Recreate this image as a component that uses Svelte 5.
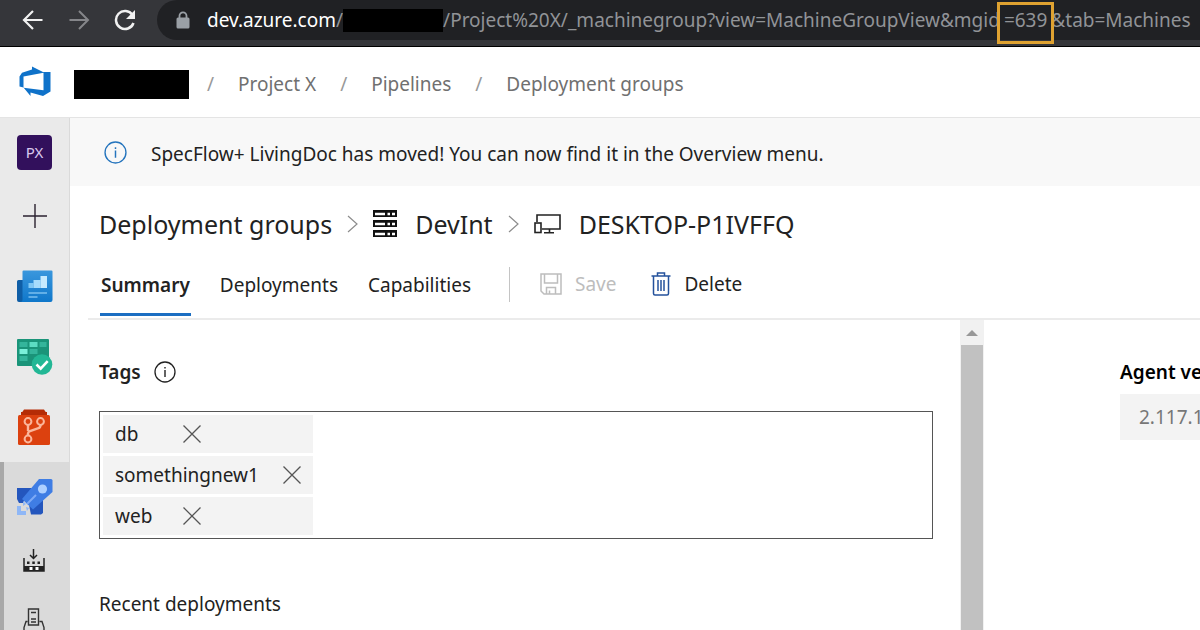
<script>
	let url = {
		host: 'dev.azure.com',
		path: '/Project%20X/_machinegroup?view=MachineGroupView&mgid',
		group: '=639',
		rest: '&tab=Machines'
	};

	let crumbs = ['Project X', 'Pipelines', 'Deployment groups'];
	let tabs = ['Summary', 'Deployments', 'Capabilities'];
	let activeTab = $state('Summary');
	let tags = $state(['db', 'somethingnew1', 'web']);

	function removeTag(tag) {
		tags = tags.filter((t) => t !== tag);
	}
</script>

{#snippet info(size)}
	<svg class="info" width={size} height={size} viewBox="0 0 22 22" fill="none" stroke="currentColor">
		<circle cx="11" cy="11" r="10" stroke-width="1.3" />
		<path d="M11 9v7M11 6v1.6" stroke-width="1.4" />
	</svg>
{/snippet}

{#snippet chevron()}
	<svg class="chevron" width="11" height="20" viewBox="0 0 11 20" fill="none" stroke="#8c8c8c" stroke-width="1.2">
		<path d="M1 2l9 8-9 8" />
	</svg>
{/snippet}

<div class="page">
	<div class="browser">
		<button class="nav" aria-label="Back">
			<svg width="22" height="22" viewBox="0 0 22 22" fill="none" stroke="#f1f1f1" stroke-width="2.2">
				<path d="M20.500 11H2.500M11 2l-9 9 9 9" />
			</svg>
		</button>
		<button class="nav" aria-label="Forward">
			<svg width="22" height="22" viewBox="0 0 22 22" fill="none" stroke="#85868a" stroke-width="2">
				<path d="M1.500 11h18M11 2l9 9-9 9" />
			</svg>
		</button>
		<button class="nav" aria-label="Reload">
			<svg width="22" height="22" viewBox="0 0 22 22" fill="none">
				<path d="M18.500 6A9 9 0 1 0 19.500 14" stroke="#f1f1f1" stroke-width="2.500" />
				<path d="M21 1v9h-9z" fill="#f1f1f1" />
			</svg>
		</button>
		<div class="address">
			<svg class="lock" width="14" height="18" viewBox="0 0 14 18">
				<path d="M3.500 8V4.800a3.500 3.500 0 0 1 7 0V8" fill="none" stroke="#9aa0a6" stroke-width="1.800" />
				<rect x="0.500" y="6.500" width="13" height="11" rx="1.500" fill="#9aa0a6" />
			</svg>
			<span class="host">{url.host}</span><span>/</span><span class="redacted"></span><span>{url.path}</span><span class="marked">{url.group}</span><span>{url.rest}</span>
		</div>
	</div>

	<header>
		<a href="/" class="logo" aria-label="Azure DevOps">
			<svg width="32" height="32" viewBox="0 0 32 32">
				<path d="M0.500 10.500L3 6.800 13 3.500V0.500L24 6 31.500 6V25.500L24 30 11.500 26.500V30L4.500 21.500 0.500 20.500z" fill="#0f72c9" />
				<path d="M4.500 10.500L24.500 6.800V24.200L4.500 21.800z" fill="#fff" />
			</svg>
		</a>
		<span class="org"></span>
		<nav>
			{#each crumbs as crumb}
				<span class="slash">/</span>
				<a href="/">{crumb}</a>
			{/each}
		</nav>
	</header>

	<div class="body">
		<aside>
			<a href="/" class="item project"><span>PX</span></a>
			<button class="add" aria-label="Add">
				<svg width="24" height="24" viewBox="0 0 24 24" stroke="#2b2230" stroke-width="1.4">
					<path d="M12 0v24M0 12h24" />
				</svg>
			</button>
			<hr />
			<a href="/" class="item" aria-label="Overview">
				<svg width="36" height="36" viewBox="0 0 36 36">
					<defs>
						<linearGradient id="ov" x1="0" y1="0" x2="0" y2="1">
							<stop offset="0" stop-color="#3a97dd" />
							<stop offset="1" stop-color="#0f77ca" />
						</linearGradient>
					</defs>
					<path d="M0 12.500a1.500 1.500 0 0 1 1.500-1.500H9v22H2a2 2 0 0 1-2-2z" fill="#0f5ea6" />
					<path d="M5.500 2.500a1 1 0 0 1 1-1h28a1 1 0 0 1 1 1V31a2 2 0 0 1-2 2H3.500a2 2 0 0 0 2-2z" fill="url(#ov)" />
					<path d="M11.500 14h5v5h-5z" fill="#80c8f5" />
					<path d="M16.500 11h7v8h-7z" fill="#a6dcfc" />
					<path d="M23.500 7H30v12h-6.500z" fill="#c6eafe" />
					<path d="M11.500 24H30M11.500 28h9" stroke="#79bff0" stroke-width="1.500" />
				</svg>
			</a>
			<a href="/" class="item" aria-label="Boards">
				<svg width="36" height="36" viewBox="0 0 36 36">
					<rect y="0" width="32" height="27" rx="1" fill="#1a9479" />
					<rect x="2.500" y="3" width="8" height="5" fill="#34b59b" />
					<rect x="12.500" y="3" width="8" height="5" fill="#5cdcc2" />
					<rect x="22.500" y="3" width="7" height="5" fill="#34b59b" />
					<rect x="2.500" y="10" width="8" height="5" fill="#7af0d9" />
					<rect x="12.500" y="10" width="8" height="5" fill="#34b59b" />
					<rect x="2.500" y="17" width="8" height="5" fill="#34b59b" />
					<circle cx="25" cy="25.500" r="10.300" fill="#22b795" />
					<path d="M19.500 25.500l4.200 4.200 7-7.500" fill="none" stroke="#fff" stroke-width="2.600" />
				</svg>
			</a>
			<a href="/" class="item" aria-label="Repos">
				<svg width="36" height="36" viewBox="0 0 36 36">
					<path d="M4 5l3-4.500h20L30 5z" fill="#b52c06" />
					<path d="M4 3h26v5H4z" fill="#b52c06" />
					<rect x="1" y="6" width="32" height="30" rx="1.500" fill="#dc410f" />
					<g fill="none" stroke="#fbb69b" stroke-width="2">
						<circle cx="11" cy="12.500" r="3.400" />
						<circle cx="23.500" cy="12.500" r="3.400" />
						<circle cx="11" cy="30" r="3.400" />
						<path d="M11 16v6M11 26.500v-2q0-1.500 2-2.300l8.500-3q2-0.700 2-3.200" stroke-width="2.400" />
					</g>
				</svg>
			</a>
			<div class="section">
				<a href="/" class="item" aria-label="Pipelines">
					<svg width="36" height="36" viewBox="0 0 36 36">
						<path d="M0 9h15L6 24H2l-2-4z" fill="#2456bd" />
						<path d="M12 26l14-11v19l-2 1.500H14z" fill="#2456bd" />
						<path d="M22 0h12a1.500 1.500 0 0 1 1.500 1.500V13L16 30.500 5 20z" fill="#3f7de4" />
						<path d="M10 25l9-9" stroke="#7eaaf6" stroke-width="2" />
						<circle cx="25.500" cy="10" r="4.600" fill="#aed0ff" />
						<path d="M0 27h4v5h5v4H0zM6 22l3 3-3 2zM9 28l3 1-2 3z" fill="#8fb7f6" />
					</svg>
				</a>
				<a href="/" class="sub" aria-label="Builds">
					<svg width="22" height="24" viewBox="0 0 22 24">
						<path d="M10.500 0v9M7 6l3.500 3.500L14 6" fill="none" stroke="#222" stroke-width="1.500" />
						<path d="M1 9v13h20V9" fill="none" stroke="#222" stroke-width="1.500" />
						<path d="M4 12.500h2.500V15H4zM9.300 12.500h2.500V15H9.300zM14.500 12.500H17V15h-2.500zM1 17h20v5H1z" fill="#222" />
						<path d="M6.500 18h3v3h-3zM12.500 18h3v3h-3z" fill="#fff" />
					</svg>
				</a>
				<a href="/" class="sub" aria-label="Deployment groups">
					<svg width="22" height="24" viewBox="0 0 22 24" fill="none" stroke="#333" stroke-width="1.400">
						<path d="M5.500 18V2h10v16zM8 5.500h5M8 12h5M8 15h5M4.500 14.500H3L1 20.500V24h20v-3.500l-2-6h-2.500" />
					</svg>
				</a>
			</div>
		</aside>

		<main>
			<div class="banner">
				{@render info(23)}
				<span>SpecFlow+ LivingDoc has moved! You can now find it in the Overview menu.</span>
			</div>

			<h1>
				<a href="/">Deployment groups</a>
				{@render chevron()}
				<svg class="servers" width="24" height="28" viewBox="0 0 24 28">
					{#each [0, 10, 20] as y}
						<rect x="0" {y} width="24" height="7" fill="#111" />
						<path d={`M2 ${y + 4}h10M14.500 ${y + 4}h2.500M19 ${y + 4}h3`} stroke="#fff" stroke-width="2.400" />
					{/each}
				</svg>
				<a href="/">DevInt</a>
				{@render chevron()}
				<svg class="desktop" width="27" height="20" viewBox="0 0 27 20" fill="none" stroke="#222" stroke-width="1.600">
					<path d="M3 8V1h23v14H8M15.500 15v3.500M10 18.700h10" />
					<rect x="1" y="9" width="6" height="9.500" />
				</svg>
				<span>DESKTOP-P1IVFFQ</span>
			</h1>

			<div class="toolbar">
				{#each tabs as tab}
					<button class="tab" class:active={tab === activeTab} onclick={() => (activeTab = tab)}>{tab}</button>
				{/each}
				<span class="divider"></span>
				<button class="command" disabled>
					<svg width="22" height="22" viewBox="0 0 22 22" fill="none" stroke="#bdbdbd" stroke-width="1.500">
						<path d="M1 1h20v20H4l-3-3zM4.500 1v9h13V1M6.500 21v-6.500h9V21M9.500 17.500V21" />
					</svg>
					Save
				</button>
				<button class="command">
					<svg width="20" height="24" viewBox="0 0 20 24" fill="none" stroke="#24529c" stroke-width="1.500">
						<path d="M0.500 4h19M6.500 4V1h7v3M2.500 4v17.500q0 1.500 1.500 1.500h12q1.500 0 1.500-1.500V4M7 8v11M10 8v11M13 8v11" />
					</svg>
					Delete
				</button>
			</div>

			<div class="panes">
				<section class="summary">
					<h2>Tags {@render info(22)}</h2>
					<ul>
						{#each tags as tag}
							<li>
								<span>{tag}</span>
								<button aria-label={`Remove ${tag}`} onclick={() => removeTag(tag)}>
									<svg width="18" height="18" viewBox="0 0 18 18" stroke="#555" stroke-width="1.300">
										<path d="M0.500 0.500l17 17M17.500 0.500l-17 17" />
									</svg>
								</button>
							</li>
						{/each}
					</ul>
					<h3>Recent deployments</h3>
				</section>
				<div class="scrollbar">
					<svg width="24" height="25" viewBox="0 0 24 25"><path d="M6 16l6-6 6 6z" fill="#989898" /></svg>
					<div class="thumb"></div>
				</div>
				<section class="agent">
					<label for="version">Agent version</label>
					<input id="version" value="2.117.1" readonly />
				</section>
			</div>
		</main>
	</div>
</div>

<style>
	:global(body) {
		margin: 0;
		overflow: hidden;
	}

	.page {
		display: flex;
		flex-direction: column;
		height: 100vh;
		overflow: hidden;
		background: #fff;
		color: #222;
		font-family: "Noto Sans", "Open Sans", sans-serif;
		font-size: 19px;
		line-height: 28px;
	}

	a {
		color: inherit;
		text-decoration: none;
	}

	button {
		display: flex;
		align-items: center;
		justify-content: center;
		padding: 0;
		border: 0;
		background: none;
		color: inherit;
		font: inherit;
	}

	svg {
		display: block;
		flex: none;
	}

	.browser {
		display: flex;
		align-items: flex-start;
		flex: none;
		height: 46px;
		padding-left: 10px;
		border-bottom: 1px solid #000;
		background: #35363a;
	}

	.nav {
		flex: none;
		width: 46px;
		height: 40px;
	}

	.address {
		display: flex;
		align-items: center;
		flex: 1;
		min-width: 0;
		height: 40px;
		margin-left: 9px;
		padding-left: 19px;
		border-radius: 20px 0 0 20px;
		background: #202124;
		color: #919397;
		white-space: nowrap;
	}

	.lock {
		margin-right: 17px;
	}

	.host {
		color: #fff;
	}

	.redacted {
		flex: none;
		width: 100px;
		height: 23px;
		background: #000;
	}

	.marked {
		position: relative;
		padding: 0 4px;
	}

	.marked::after {
		content: "";
		position: absolute;
		inset: -4px -3px -10px -3px;
		border: 3px solid #dfa231;
	}

	header {
		display: flex;
		align-items: center;
		flex: none;
		height: 70px;
		padding-left: 19px;
		border-bottom: 1px solid #e4e4e4;
	}

	.org {
		width: 115px;
		height: 29px;
		margin: 4px 0 0 23px;
		background: #000;
	}

	nav {
		display: flex;
		padding-top: 4px;
		color: #707070;
	}

	.slash {
		width: 8px;
		margin: 0 23px 0 18px;
		color: #999;
	}

	nav a + .slash {
		margin-left: 24px;
	}

	.body {
		display: flex;
		flex: 1;
		min-height: 0;
	}

	aside {
		display: flex;
		flex-direction: column;
		flex: none;
		width: 69px;
		overflow: hidden;
		border-right: 1px solid #dadada;
		background: #eaeaea;
	}

	.item {
		display: flex;
		align-items: center;
		flex: none;
		height: 70px;
		padding-left: 17px;
	}

	.item.project {
		height: 68px;
	}

	.project span {
		width: 35px;
		border-radius: 4px;
		background: #32105c;
		color: #d9c8ee;
		font-size: 15px;
		line-height: 35px;
		text-align: center;
	}

	.add {
		flex: none;
		height: 60px;
	}

	hr {
		width: 40px;
		height: 1px;
		margin: 0 14px 6px;
		border: 0;
		background: #c4c4c4;
	}

	.section {
		flex: 1;
		border-left: 4px solid #a8a8a8;
		background: #dadada;
	}

	.section .item {
		padding-left: 13px;
	}

	.sub {
		display: flex;
		align-items: center;
		height: 58px;
		padding-left: 19px;
	}

	main {
		display: flex;
		flex-direction: column;
		flex: 1;
		min-width: 0;
	}

	.banner {
		display: flex;
		align-items: center;
		flex: none;
		gap: 24px;
		height: 68px;
		padding-left: 34px;
		background: #f8f8f8;
	}

	.banner .info {
		color: #2474bd;
	}

	.banner span {
		padding-top: 3px;
	}

	h1 {
		display: flex;
		align-items: center;
		flex: none;
		height: 64px;
		margin: 6px 0 0 29px;
		font-size: 25px;
		font-weight: 400;
	}

	.chevron {
		margin: 0 15px;
	}

	.servers,
	.desktop {
		margin-right: 18px;
	}

	.toolbar {
		display: flex;
		align-items: center;
		flex: none;
		box-sizing: border-box;
		height: 64px;
		margin-left: 18px;
		padding: 0 0 2px 12px;
		border-bottom: 2px solid #ebebeb;
	}

	.tab {
		align-self: stretch;
		margin-right: 28px;
		padding: 0 1px;
		border-bottom: 3px solid transparent;
	}

	.tab.active {
		border-bottom-color: #1b6ec2;
		font-weight: 600;
	}

	.divider {
		width: 1px;
		height: 35px;
		margin: 0 30px 4px 9px;
		background: #c4c4c4;
	}

	.command {
		gap: 13px;
		margin: 0 35px 4px 0;
	}

	.command:disabled {
		color: #bdbdbd;
	}

	.panes {
		display: grid;
		grid-template-columns: minmax(0, 1fr) 24px 216px;
		flex: 1;
		min-height: 0;
		overflow: hidden;
	}

	.summary {
		padding: 38px 27px 0 29px;
	}

	h2,
	h3,
	label {
		margin: 0;
		font-size: 19px;
		font-weight: 600;
	}

	h2 {
		display: flex;
		align-items: center;
		gap: 13px;
	}

	h3 {
		font-weight: 400;
	}

	ul {
		display: flex;
		flex-direction: column;
		gap: 3px;
		margin: 25px 0 51px;
		padding: 3px;
		border: 1px solid #555;
		list-style: none;
	}

	li {
		display: flex;
		align-items: center;
		gap: 24px;
		width: 198px;
		height: 38px;
		padding-left: 12px;
		background: #f3f3f3;
	}

	li span {
		min-width: 44px;
	}

	.scrollbar {
		display: flex;
		flex-direction: column;
		background: #f1f1f1;
	}

	.thumb {
		flex: 1;
		margin: 0 1px;
		background: #c1c1c1;
	}

	.agent {
		padding: 38px 0 0 136px;
		overflow: hidden;
		white-space: nowrap;
	}

	.agent label {
		display: block;
		color: #000;
	}

	input {
		box-sizing: border-box;
		width: 240px;
		height: 46px;
		margin-top: 8px;
		padding: 0 19px;
		border: 0;
		background: #f3f3f3;
		color: #777;
		font: inherit;
	}
</style>
